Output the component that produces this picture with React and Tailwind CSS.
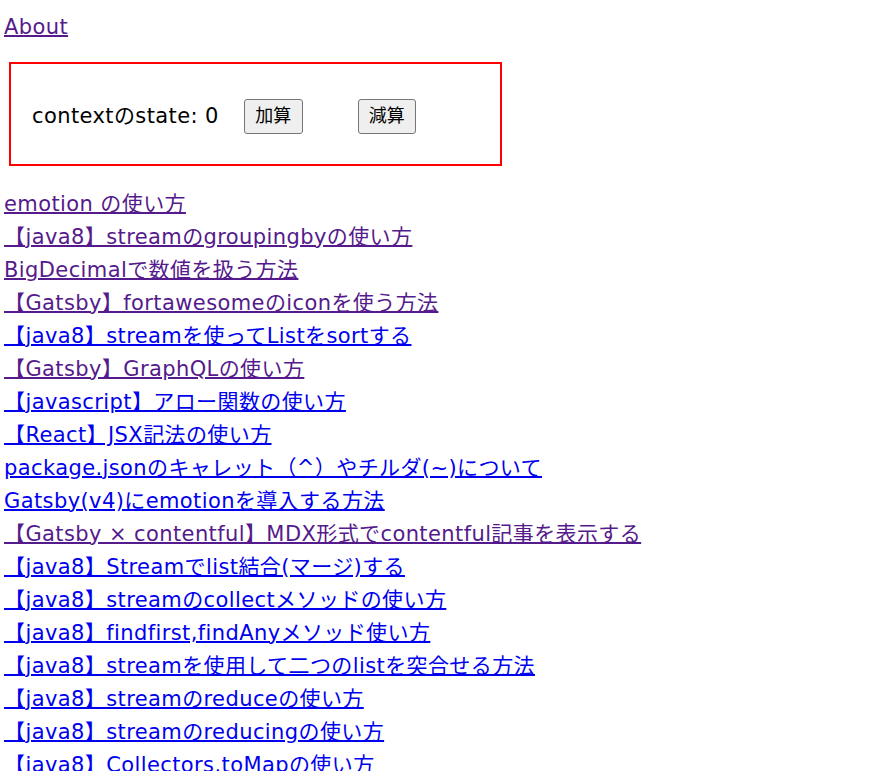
import React from "react";

const links = [
  ["emotion の使い方", true],
  ["【java8】streamのgroupingbyの使い方", true],
  ["BigDecimalで数値を扱う方法", true],
  ["【Gatsby】fortawesomeのiconを使う方法", true],
  ["【java8】streamを使ってListをsortする", false],
  ["【Gatsby】GraphQLの使い方", true],
  ["【javascript】アロー関数の使い方", false],
  ["【React】JSX記法の使い方", false],
  ["package.jsonのキャレット（^）やチルダ(~)について", false],
  ["Gatsby(v4)にemotionを導入する方法", false],
  ["【Gatsby × contentful】MDX形式でcontentful記事を表示する", true],
  ["【java8】Streamでlist結合(マージ)する", false],
  ["【java8】streamのcollectメソッドの使い方", false],
  ["【java8】findfirst,findAnyメソッド使い方", false],
  ["【java8】streamを使用して二つのlistを突合せる方法", false],
  ["【java8】streamのreduceの使い方", false],
  ["【java8】streamのreducingの使い方", false],
  ["【java8】Collectors.toMapの使い方", false],
];

export default function App() {
  return (
    <div
      className="bg-white text-black text-[21px] tracking-[0.4px] leading-[33px] pl-[4px] pt-[11px] h-[771px] overflow-hidden"
      style={{ fontFamily: '"DejaVu Sans", "Noto Sans CJK JP", sans-serif' }}
    >
      <div>
        <a href="#" className="text-[#551a8b] underline decoration-2">About</a>
      </div>
      <div className="mt-[18px] ml-[5px] w-[493px] h-[104px] border-2 border-[#ff0000] flex items-center pl-[21px] pt-[4px]">
        <span>contextのstate: 0</span>
        <button className="ml-[25px] w-[59px] h-[35px] bg-[#efefef] border border-[#767676] rounded-[3px] text-[18px] tracking-normal leading-[20px] text-black">
          加算
        </button>
        <button className="ml-[55px] w-[58px] h-[35px] bg-[#efefef] border border-[#767676] rounded-[3px] text-[18px] tracking-normal leading-[20px] text-black">
          減算
        </button>
      </div>
      <div className="mt-[22px]">
        {links.map(([t, v], i) => (
          <div key={i}>
            <a
              href="#"
              className={(v ? "text-[#551a8b]" : "text-[#0000ee]") + " underline decoration-2"}
            >
              {t}
            </a>
          </div>
        ))}
      </div>
    </div>
  );
}
